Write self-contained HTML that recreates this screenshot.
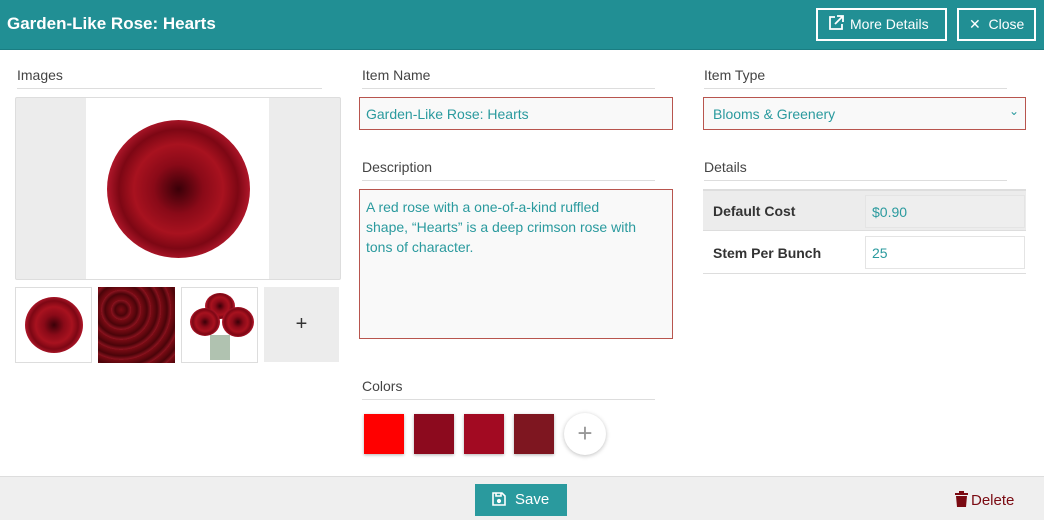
<!DOCTYPE html>
<html><head><style>
*{box-sizing:border-box;margin:0;padding:0}
body{width:1044px;height:520px;position:relative;background:#fff;font-family:"Liberation Sans",sans-serif;overflow:hidden;color:#333}
.hdr{position:absolute;left:0;top:0;width:1044px;height:50px;background:#218f94;border-bottom:1px solid #1a7d82}
.hdr h1{position:absolute;left:7px;top:14px;font-size:17px;font-weight:bold;color:#fff}
.btn{position:absolute;top:8px;height:33px;border:2px solid #fff;color:#fff;font-size:14px;line-height:29px;padding-left:10px}
.lbl{position:absolute;font-size:14px;color:#444;border-bottom:1px solid #ddd;padding-bottom:5px}
.inp{position:absolute;border:1px solid #b8554e;background:#f9f9f9;color:#2a9a9e;font-size:14px;padding:8px 6px}
.rose{border-radius:50%;background:radial-gradient(circle at 50% 50%,#3a0008 0,#8a0a18 25%,#a8121f 45%,#7d0714 60%,#b0172a 72%,#8c0a18 85%)}
.sw{position:absolute;top:414px;width:40px;height:40px;box-shadow:0 1px 3px rgba(0,0,0,.3)}
</style></head><body>
<div class="hdr"><h1>Garden-Like Rose: Hearts</h1>
<div class="btn" style="left:816px;width:131px"><svg width="16" height="16" viewBox="0 0 16 16" style="vertical-align:-2px;margin-right:6px" fill="none" stroke="#fff" stroke-width="1.8"><path d="M7 2H2v12h12V9M9 1h6v6M15 1L7 9"/></svg>More Details</div>
<div class="btn" style="left:957px;width:79px">✕&nbsp; Close</div>
</div>

<div class="lbl" style="left:17px;top:67px;width:305px">Images</div>
<div style="position:absolute;left:15px;top:97px;width:326px;height:183px;background:#ececec;border:1px solid #ddd;border-radius:2px"></div>
<div style="position:absolute;left:86px;top:98px;width:183px;height:181px;background:#fff"></div>
<div class="rose" style="position:absolute;left:107px;top:120px;width:143px;height:138px"></div>
<div style="position:absolute;left:15px;top:287px;width:77px;height:76px;border:1px solid #ddd;background:#fff"></div>
<div class="rose" style="position:absolute;left:25px;top:297px;width:58px;height:56px"></div>
<div style="position:absolute;left:98px;top:287px;width:77px;height:76px;background:repeating-radial-gradient(circle at 30% 30%,#7a0b14 0,#4a0409 6px,#8c1420 10px);"></div>
<div style="position:absolute;left:181px;top:287px;width:77px;height:76px;border:1px solid #ddd;background:#fff"></div>
<div class="rose" style="position:absolute;left:205px;top:293px;width:30px;height:26px"></div>
<div class="rose" style="position:absolute;left:190px;top:308px;width:30px;height:28px"></div>
<div class="rose" style="position:absolute;left:222px;top:307px;width:32px;height:30px"></div>
<div style="position:absolute;left:210px;top:335px;width:20px;height:25px;background:#7b9a7b;opacity:.6"></div>
<div style="position:absolute;left:264px;top:287px;width:75px;height:75px;background:#ececec;text-align:center;line-height:75px;font-size:20px;color:#333">+</div>

<div class="lbl" style="left:362px;top:67px;width:293px">Item Name</div>
<div class="inp" style="left:359px;top:97px;width:314px;height:33px">Garden-Like Rose: Hearts</div>
<div class="lbl" style="left:362px;top:159px;width:293px">Description</div>
<div class="inp" style="left:359px;top:189px;width:314px;height:150px;line-height:20px;padding:7px 6px 6px 6px">A red rose with a one-of-a-kind ruffled<br>shape, “Hearts” is a deep crimson rose with<br>tons of character.</div>
<div class="lbl" style="left:362px;top:378px;width:293px">Colors</div>
<div class="sw" style="left:364px;background:#ff0000"></div>
<div class="sw" style="left:414px;background:#8c0a1e"></div>
<div class="sw" style="left:464px;background:#a20a22"></div>
<div class="sw" style="left:514px;background:#7e1620"></div>
<div style="position:absolute;left:564px;top:413px;width:42px;height:42px;border-radius:50%;background:#fff;box-shadow:0 1px 4px rgba(0,0,0,.25);text-align:center;line-height:40px;font-size:26px;color:#999">+</div>

<div class="lbl" style="left:704px;top:67px;width:303px">Item Type</div>
<div class="inp" style="left:703px;top:97px;width:323px;height:33px;padding-left:9px">Blooms &amp; Greenery<span style="position:absolute;right:6px;top:6px;font-size:12px">⌄</span></div>
<div class="lbl" style="left:704px;top:159px;width:303px">Details</div>
<div style="position:absolute;left:703px;top:189px;width:323px;height:42px;background:#ececec;border-top:2px solid #ddd;border-bottom:1px solid #ddd"></div>
<div style="position:absolute;left:713px;top:203px;font-size:14px;font-weight:bold;color:#333">Default Cost</div>
<div style="position:absolute;left:865px;top:195px;width:160px;height:33px;background:#eee;border:1px solid #e4e4e4;color:#2a9a9e;font-size:14px;padding:8px 6px">$0.90</div>
<div style="position:absolute;left:703px;top:231px;width:323px;height:43px;border-bottom:1px solid #ddd"></div>
<div style="position:absolute;left:713px;top:245px;font-size:14px;font-weight:bold;color:#333">Stem Per Bunch</div>
<div style="position:absolute;left:865px;top:236px;width:160px;height:33px;background:#fff;border:1px solid #e4e4e4;color:#2a9a9e;font-size:14px;padding:8px 6px">25</div>

<div style="position:absolute;left:0;top:476px;width:1044px;height:44px;background:#efefef;border-top:1px solid #ddd"></div>
<div style="position:absolute;left:475px;top:484px;width:92px;height:32px;background:#2a9a9e;color:#fff;font-size:15px;line-height:32px;padding-left:17px"><svg width="14" height="14" viewBox="0 0 14 14" fill="none" stroke="#fff" stroke-width="1.6" style="vertical-align:-2px;margin-right:9px"><path d="M1 1h9l3 3v9H1zM4 1v3h5V1"/><circle cx="7" cy="9" r="1.3" fill="#fff"/></svg>Save</div>
<div style="position:absolute;left:955px;top:491px;font-size:15px;color:#7a0a12"><svg width="13" height="16" viewBox="0 0 13 16" style="vertical-align:-2px;margin-right:3px"><path d="M0 2h13v2H0zM4 0h5v2H4zM1 5h11l-1 11H2z" fill="#7a0a12"/></svg>Delete</div>
</body></html>
